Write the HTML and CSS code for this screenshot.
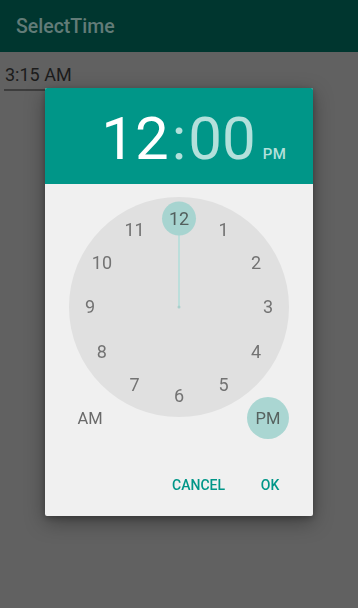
FILE: index.html
```html
<!DOCTYPE html>
<html lang="en">
<head>
<meta charset="utf-8">
<title>SelectTime</title>
<link rel="stylesheet" href="styles.css">
</head>
<body>
<div class="app">
  <header class="appbar"><span class="title">SelectTime</span></header>
  <main class="content">
    <div class="field">3:15 AM</div>
  </main>
</div>

<div class="dialog" role="dialog">
  <div class="dlg-header">
    <span class="h-left"><span class="hour">12</span></span>
    <span class="sep">:</span>
    <span class="h-right"><span class="minute">00</span><span class="ampm">PM</span></span>
  </div>
  <div class="dlg-body">
    <div class="clock">
      <svg class="face" width="220" height="220" viewBox="0 0 220 220">
        <circle cx="110" cy="110" r="110" fill="#e0e0e0"/>
        <line x1="110" y1="110" x2="110" y2="38" stroke="#bcdedb" stroke-width="2"/>
        <circle cx="110" cy="110" r="1.5" fill="#a9cfcb"/>
        <circle cx="110" cy="21.5" r="17" fill="#a7d4d0"/>
        <g class="nums">
          <text x="154.5" y="39.3">1</text>
          <text x="187.1" y="71.9">2</text>
          <text x="199" y="116.4">3</text>
          <text x="187.1" y="160.9">4</text>
          <text x="154.5" y="193.5">5</text>
          <text x="110" y="205.4">6</text>
          <text x="65.5" y="193.5">7</text>
          <text x="32.9" y="160.9">8</text>
          <text x="21" y="116.4">9</text>
          <text x="32.9" y="71.9">10</text>
          <text x="65.5" y="39.3">11</text>
          <text class="sel" x="110" y="27.9">12</text>
        </g>
      </svg>
      <div class="ampm-row">
        <span class="ap">AM</span>
        <span class="ap on">PM</span>
      </div>
    </div>
    <div class="actions">
      <button class="btn">CANCEL</button>
      <button class="btn">OK</button>
    </div>
  </div>
</div>
</body>
</html>
```
FILE: styles.css
```css
html, body {
  margin: 0;
  padding: 0;
}
body {
  width: 358px;
  height: 608px;
  background: #616161;
  font-family: Roboto, "Noto Sans", "Liberation Sans", sans-serif;
  overflow: hidden;
}
.app {
  display: flex;
  flex-direction: column;
}
.appbar {
  height: 52px;
  background: #00362f;
  display: flex;
  align-items: center;
  padding: 0 16px;
  box-sizing: border-box;
}
.title {
  color: #627c78;
  font-size: 19.5px;
  font-weight: 500;
  margin-top: 1px;
}
.content {
  padding: 10px 4px 0;
}
.field {
  width: 90px;
  font-size: 18px;
  line-height: 26px;
  color: #1c1c1c;
  padding-left: 1px;
  border-bottom: 2px solid #3d3d3d;
  height: 27px;
}
.dialog {
  position: fixed;
  left: 45px;
  top: 88px;
  width: 268px;
  background: #f0f0f0;
  box-shadow: 0 6px 20px rgba(0, 0, 0, 0.35), 0 2px 6px rgba(0, 0, 0, 0.25);
  border-radius: 2px;
  overflow: hidden;
}
.dlg-header {
  height: 96px;
  box-sizing: border-box;
  padding-top: 21px;
  background: #009688;
  display: flex;
  align-items: baseline;
  line-height: 60px;
}
.h-left {
  flex: 1;
  text-align: right;
}
.h-right {
  flex: 1;
  display: flex;
  align-items: baseline;
}
.hour, .minute, .sep {
  font-size: 60px;
  font-weight: 400;
}
.hour {
  color: #ffffff;
  margin-right: 3px;
}
.sep {
  color: #b3e0db;
}
.minute {
  color: #b3e0db;
  margin-left: 2px;
}
.ampm {
  color: #b3e0db;
  font-size: 15px;
  font-weight: 500;
  letter-spacing: 0.4px;
  margin-left: 7px;
  line-height: 20px;
}
.dlg-body {
  display: flex;
  flex-direction: column;
}
.clock {
  display: grid;
  padding-top: 13px;
}
.face {
  grid-area: 1 / 1;
  justify-self: center;
  margin-bottom: 22px;
  display: block;
}
.nums text {
  font-family: Roboto, "Noto Sans", sans-serif;
  font-size: 18px;
  fill: #737373;
  text-anchor: middle;
}
.nums text.sel {
  fill: #53605e;
}
.ampm-row {
  grid-area: 1 / 1;
  align-self: end;
  display: flex;
  justify-content: space-between;
  padding: 0 24px;
}
.ap {
  width: 42px;
  height: 42px;
  border-radius: 50%;
  display: flex;
  align-items: center;
  justify-content: center;
  font-size: 16.5px;
  color: #6a6a6a;
}
.ap.on {
  background: #aad6d2;
  color: #56625f;
}
.actions {
  display: flex;
  justify-content: flex-end;
  gap: 5px;
  padding: 28px 11px 13px 0;
}
.btn {
  min-width: 64px;
  height: 36px;
  padding: 0 8px;
  border: none;
  background: transparent;
  font-family: Roboto, "Noto Sans", sans-serif;
  font-size: 14px;
  font-weight: 500;
  color: #009688;
  cursor: pointer;
}
```
